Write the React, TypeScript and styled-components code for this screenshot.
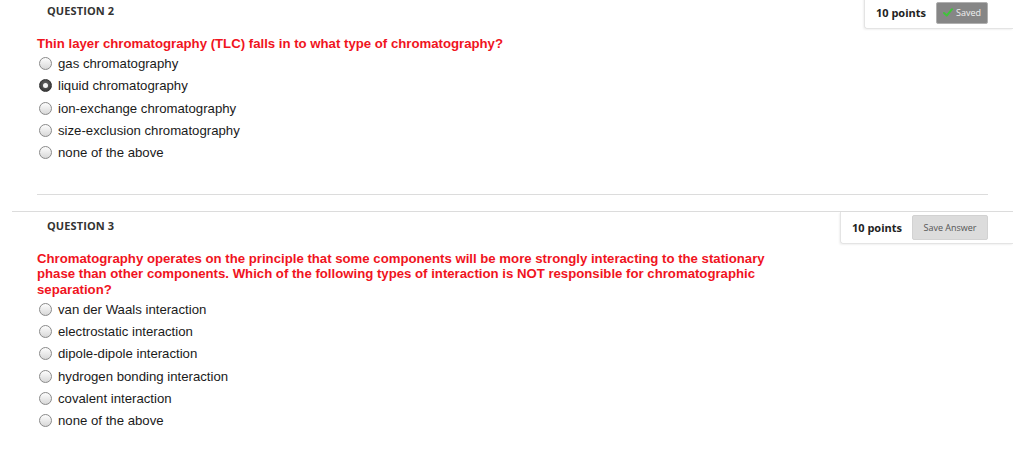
import React from 'react';
import styled, { createGlobalStyle } from 'styled-components';

const GlobalStyle = createGlobalStyle`
  body {
    margin: 0;
    background: #fff;
    font-family: 'Liberation Sans', Arial, sans-serif;
  }
`;

const Page = styled.div`
  padding: 0 11px 0 12px;
  overflow: hidden;
  height: 458px;
`;

const Question = styled.div<{ $first?: boolean }>`
  border-top: 1px solid #dcdcdc;
  margin-top: ${(p) => (p.$first ? '-4px' : '0')};
  padding-bottom: 16px;
`;

const Header = styled.div`
  display: flex;
  justify-content: space-between;
  align-items: flex-start;
`;

const Title = styled.h3`
  margin: 0;
  padding: 6px 0 0 35px;
  font-family: 'Open Sans', sans-serif;
  font-size: 11px;
  line-height: 15px;
  font-weight: 700;
  color: #333;
  letter-spacing: 0.1px;
`;

const PointsBox = styled.div`
  display: flex;
  align-items: center;
  gap: 10px;
  height: 32px;
  box-sizing: border-box;
  padding: 0 25px 0 11px;
  border-left: 1px solid #e4e4e4;
  border-bottom: 1px solid #e4e4e4;
  border-bottom-left-radius: 3px;
  box-shadow: -1px 1px 2px rgba(0, 0, 0, 0.06);
`;

const Points = styled.span`
  font-family: 'Open Sans', sans-serif;
  font-size: 11px;
  font-weight: 700;
  color: #222;
`;

const ActionButton = styled.span<{ $saved?: boolean }>`
  display: inline-flex;
  align-items: center;
  justify-content: center;
  gap: 3px;
  box-sizing: border-box;
  height: ${(p) => (p.$saved ? '22px' : '25px')};
  width: ${(p) => (p.$saved ? '52px' : '76px')};
  font-family: 'Open Sans', sans-serif;
  font-size: 9px;
  color: ${(p) => (p.$saved ? '#f0f0f0' : '#555')};
  background: ${(p) => (p.$saved ? '#868686' : '#dcdcdc')};
  border: 1px solid ${(p) => (p.$saved ? '#b0b0b0' : '#d2d2d2')};
  border-radius: 2px;
`;

const Body = styled.div`
  padding: 7px 25px 0 25px;
`;

const Prompt = styled.p`
  margin: 0;
  width: 745px;
  font-size: 13.2px;
  line-height: 15.5px;
  font-weight: 700;
  color: #f0141e;
`;

const Options = styled.ul`
  list-style: none;
  margin: 1px 0 0 0;
  padding: 0;
`;

const Option = styled.li`
  display: flex;
  align-items: center;
  gap: 6px;
  height: 22.25px;
  font-size: 13.2px;
  color: #1a1a1a;
`;

const Radio = styled.span<{ $checked?: boolean }>`
  position: relative;
  width: 13px;
  height: 13px;
  margin-left: 2px;
  box-sizing: border-box;
  border-radius: 50%;
  border: 1px solid ${(p) => (p.$checked ? '#333' : '#8a8a8a')};
  background: ${(p) =>
    p.$checked
      ? 'radial-gradient(circle at 50% 40%, #6a6a6a 0%, #3c3c3c 70%)'
      : 'linear-gradient(#fdfdfd, #d8d8d8)'};
  &::after {
    content: '';
    display: ${(p) => (p.$checked ? 'block' : 'none')};
    position: absolute;
    left: 3px;
    top: 3px;
    width: 5px;
    height: 5px;
    border-radius: 50%;
    background: #f4f4f4;
  }
`;

const Divider = styled.div`
  margin: 30px 25px 0 25px;
  border-top: 1px solid #dcdcdc;
`;

const Check = () => (
  <svg width="10" height="9" viewBox="0 0 10 9">
    <path d="M1 5 L3.8 7.6 L9 1.2" fill="none" stroke="#3fc43a" strokeWidth="2" strokeLinecap="round" strokeLinejoin="round" />
  </svg>
);

type Q = {
  num: number;
  prompt: string;
  options: string[];
  checked?: number;
  saved?: boolean;
};

const questions: Q[] = [
  {
    num: 2,
    prompt: 'Thin layer chromatography (TLC) falls in to what type of chromatography?',
    options: [
      'gas chromatography',
      'liquid chromatography',
      'ion-exchange chromatography',
      'size-exclusion chromatography',
      'none of the above',
    ],
    checked: 1,
    saved: true,
  },
  {
    num: 3,
    prompt:
      'Chromatography operates on the principle that some components will be more strongly interacting to the stationary phase than other components. Which of the following types of interaction is NOT responsible for chromatographic separation?',
    options: [
      'van der Waals interaction',
      'electrostatic interaction',
      'dipole-dipole interaction',
      'hydrogen bonding interaction',
      'covalent interaction',
      'none of the above',
    ],
  },
];

export default function App() {
  return (
    <>
      <GlobalStyle />
      <Page>
        {questions.map((q, qi) => (
          <Question key={q.num} $first={qi === 0}>
            <Header>
              <Title>QUESTION {q.num}</Title>
              <PointsBox>
                <Points>10 points</Points>
                {q.saved ? (
                  <ActionButton $saved>
                    <Check />
                    Saved
                  </ActionButton>
                ) : (
                  <ActionButton>Save Answer</ActionButton>
                )}
              </PointsBox>
            </Header>
            <Body>
              <Prompt>{q.prompt}</Prompt>
              <Options>
                {q.options.map((o, i) => (
                  <Option key={o}>
                    <Radio $checked={q.checked === i} />
                    {o}
                  </Option>
                ))}
              </Options>
            </Body>
            {qi === 0 && <Divider />}
          </Question>
        ))}
      </Page>
    </>
  );
}
